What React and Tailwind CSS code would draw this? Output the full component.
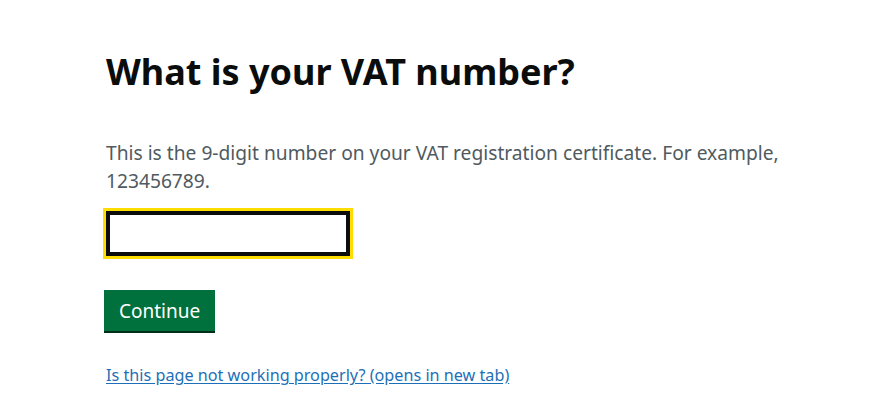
export default function App() {
  return (
    <div className="min-h-[412px] w-full bg-white" style={{ fontFamily: '"Noto Sans", Arial, sans-serif' }}>
      <div className="pl-[106px] pt-[48px] w-[826px]">
        <h1 className="text-[36px] leading-[48px] font-bold text-[#0b0c0c]">What is your VAT number?</h1>
        <p className="mt-[43px] text-[19.2px] leading-[28px] text-[#505a5f]">
          This is the 9-digit number on your VAT registration certificate. For example, 123456789.
        </p>
        <div className="mt-[16px] -ml-[3px]">
          <input
            type="text"
            className="block w-[244px] h-[45px] ml-[3px] border-2 border-[#0b0c0c] shadow-[inset_0_0_0_2px_#0b0c0c] outline outline-[3px] outline-[#ffdd00] bg-white"
          />
        </div>
        <button className="mt-[34px] -ml-[2px] block bg-[#00703c] text-white text-[19px] leading-[24px] px-[15px] pt-[9px] pb-[8px] shadow-[0_2px_0_#002d18]">
          Continue
        </button>
        <a href="#" className="mt-[33px] inline-block text-[16.2px] leading-[22px] text-[#1d70b8] underline underline-offset-[2px]">
          Is this page not working properly? (opens in new tab)
        </a>
      </div>
    </div>
  );
}
